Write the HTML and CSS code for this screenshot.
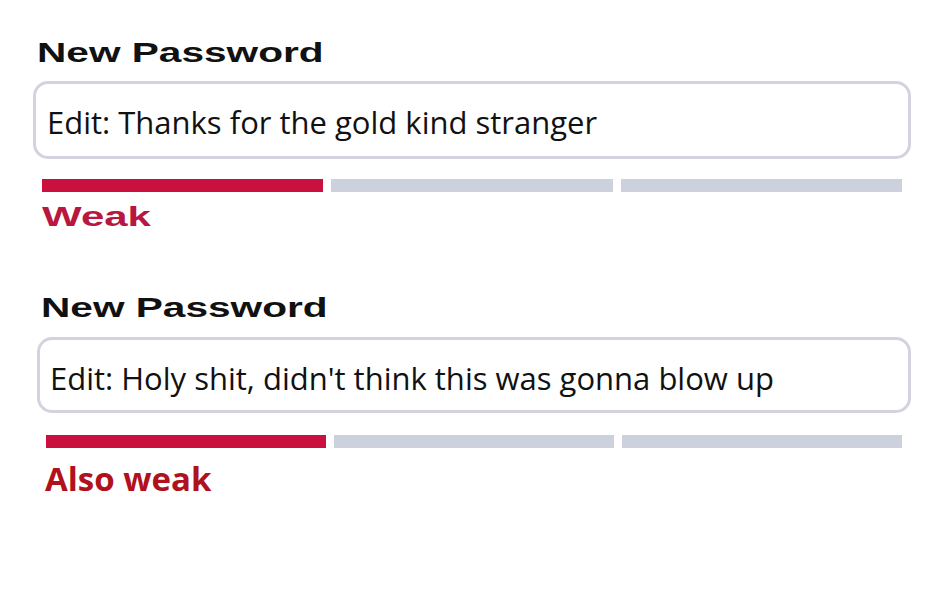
FILE: index.html
```html
<!DOCTYPE html>
<html lang="en">
<head>
    <meta charset="UTF-8">
    <meta name="viewport" content="width=device-width, initial-scale=1.0">
    <title>New Password</title>
    <link rel="stylesheet" href="styles.css">
</head>
<body>
    <!-- first attempt -->
    <div class="field first">
        <label class="label">New Password</label>
        <div class="box">Edit: Thanks for the gold kind stranger</div>
        <div class="meter">
            <span class="seg on"></span>
            <span class="seg"></span>
            <span class="seg"></span>
        </div>
        <div class="strength">Weak</div>
    </div>

    <!-- second attempt -->
    <div class="field second">
        <label class="label">New Password</label>
        <div class="box">Edit: Holy shit, didn't think this was gonna blow up</div>
        <div class="meter">
            <span class="seg on"></span>
            <span class="seg"></span>
            <span class="seg"></span>
        </div>
        <div class="strength also">Also weak</div>
    </div>
</body>
</html>
```

FILE: styles.css
```css
body {
    margin: 0;
    background-color: #fff;
    font-family: "Liberation Sans", Arial, sans-serif;
}
.field {
    display: flex;
    flex-direction: column;
    align-items: flex-start;
}
.first {
    margin: 39px 28px 0 33px;
}
.second {
    margin: 63px 28px 0 37px;
}
.label {
    display: block;
    margin-left: 4px;
    font-size: 28px;
    line-height: 28px;
    font-weight: bold;
    color: #111;
    transform: scaleX(1.45);
    transform-origin: left;
}
.box {
    box-sizing: border-box;
    align-self: stretch;
    display: flex;
    align-items: center;
    height: 78px;
    margin-top: 14px;
    padding: 4px 0 0 11px;
    border: 3px solid #d2d3de;
    border-radius: 15px;
    font-family: "Open Sans", sans-serif;
    font-size: 31px;
    color: #111;
}
.second .box {
    height: 76px;
    margin-top: 15px;
    padding: 6px 0 0 10px;
}
.meter {
    align-self: stretch;
    display: flex;
    gap: 8px;
    margin: 20px 9px 0 9px;
}
.second .meter {
    margin-top: 22px;
}
.seg {
    flex: 1;
    height: 13px;
    background-color: #ccd1dd;
}
.seg.on {
    background-color: #c9103e;
}
.strength {
    margin: 11px 0 0 9px;
    font-size: 28px;
    line-height: 28px;
    font-weight: bold;
    color: #b8173f;
    transform: scaleX(1.5);
    transform-origin: left;
}
.strength.also {
    margin: 14px 0 0 8px;
    font-family: "Open Sans", sans-serif;
    font-size: 33px;
    line-height: 33px;
    color: #b0111c;
    transform: none;
}
```
